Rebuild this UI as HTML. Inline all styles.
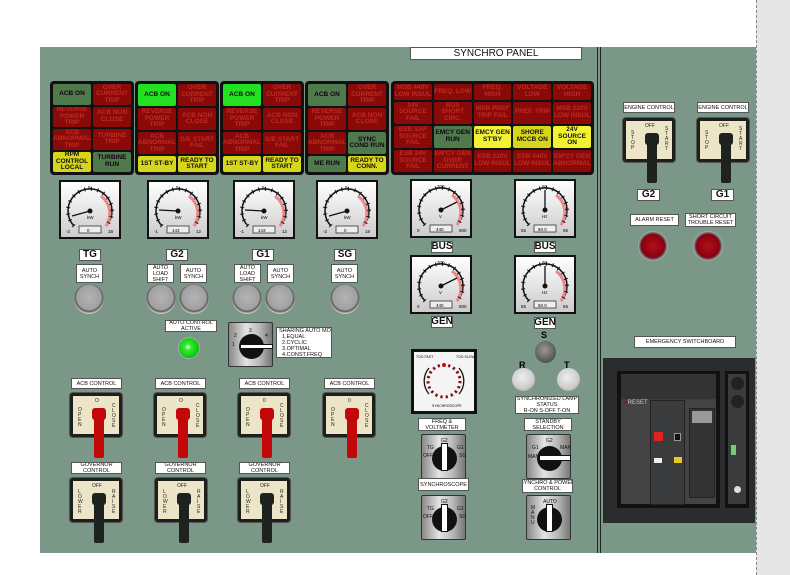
<!DOCTYPE html>
<html><head><meta charset="utf-8"><style>
*{box-sizing:border-box;margin:0;padding:0}
body{width:790px;height:575px;background:#fff;position:relative;overflow:hidden;font-family:"Liberation Sans",sans-serif}
.a{position:absolute}
.panel{left:40px;top:47px;width:716px;height:506px;background:#7a9787}
.strip{left:756px;top:0;width:34px;height:575px;background:#e6e6e6;border-left:1px dashed #888}
.lbl{position:absolute;background:#fff;border:1px solid #555;font-size:5.5px;line-height:6px;text-align:center;display:flex;align-items:center;justify-content:center;color:#111;white-space:nowrap;overflow:hidden}
.big{font-size:10px;font-weight:bold}
.blk{position:absolute;background:#111;border-radius:4px;padding:3px;display:grid;gap:2px;top:81px;height:94px}
.c{border-radius:2px;font-size:6.5px;line-height:6.5px;text-align:center;display:flex;align-items:center;justify-content:center;background:#8a0a0a;color:#c02a20;font-weight:bold;overflow:hidden}
.dg{background:#4f7a4c;color:#101;}
.bg{background:#22e022;color:#111}
.ye{background:#d6d61c;color:#111}
.by{background:#f2f232;color:#111}
.btn{position:absolute;width:30px;height:30px;border-radius:50%;background:radial-gradient(circle at 50% 45%,#b4b4b4 0,#a0a0a0 55%,#5a5a5a 62%,#d0d0d0 72%,#777 100%)}
.sw{position:absolute;width:52px;height:44px;background:#ede5c8;border:3px solid #1c1f1c;border-radius:3px;box-shadow:0 0 0 1px #555}
.sw span{position:absolute;font-size:5px;color:#222;line-height:5px}
.hd{position:absolute;left:19px;top:12px;width:14px;height:12px;border-radius:3px}
.st{position:absolute;left:21px;top:22px;width:10px;height:40px;border-radius:0 0 2px 2px}
.red .hd,.red .st{background:#c20808}
.blkh .hd,.blkh .st{background:#1e2320}
.rs{position:absolute;width:45px;height:45px;background:linear-gradient(90deg,#888,#e4e4e4 40%,#bbb 70%,#777);border:1px solid #333;border-radius:2px}
.rs span{position:absolute;font-size:5px;color:#111}
.kn{position:absolute;left:10px;top:11px;width:25px;height:25px;border-radius:50%;background:#111}
.kb{position:absolute;left:19px;top:8px;width:7px;height:28px;background:#fff;border:1px solid #111}
</style></head><body>
<svg width="0" height="0" style="position:absolute"><defs>
<linearGradient id="gf" x1="0" y1="0" x2="0" y2="1"><stop offset="0" stop-color="#fff"/><stop offset="1" stop-color="#ccc"/></linearGradient>
<symbol id="g" viewBox="0 0 64 61">
<rect x="1" y="1" width="62" height="59" fill="#111"/><rect x="3" y="3" width="58" height="55" fill="url(#gf)"/>
<path d="M16 47 A22 22 0 1 1 48 47" fill="none" stroke="#111" stroke-width="1.5"/>
<path d="M43 17 A22 22 0 0 1 48 47" fill="none" stroke="#e88" stroke-width="3"/>
<path d="M16 47 A22 22 0 1 1 48 47" fill="none" stroke="#111" stroke-width="4" stroke-dasharray="1 5.5"/>
<circle cx="32" cy="32" r="2.5" fill="#111"/>
<rect x="21" y="47" width="22" height="7" fill="#eee" stroke="#333" stroke-width=".8"/>
</symbol>
</defs></svg>
<div class="a panel"></div>
<div class="a strip"></div>
<div class="a" style="left:597px;top:47px;width:4px;height:506px;border-left:1px solid #222;border-right:1px solid #222"></div>
<div class="lbl" style="left:410px;top:47px;width:172px;height:13px;font-size:10px">SYNCHRO PANEL</div>

<div class="blk" style="left:50px;width:84px;grid-template-columns:1fr 1fr">
<div class="c dg">ACB ON</div><div class="c">OVER CURRENT TRIP</div><div class="c">REVERSE POWER TRIP</div><div class="c">ACB NON CLOSE</div><div class="c">ACB ABNORMAL TRIP</div><div class="c">TURBINE TRIP</div><div class="c ye">RPM CONTROL LOCAL</div><div class="c dg">TURBINE RUN</div></div>
<div class="blk" style="left:135px;width:84px;grid-template-columns:1fr 1fr">
<div class="c bg">ACB ON</div><div class="c">OVER CURRENT TRIP</div><div class="c">REVERSE POWER TRIP</div><div class="c">ACB NON CLOSE</div><div class="c">ACB ABNORMAL TRIP</div><div class="c">G/E START FAIL</div><div class="c ye">1ST ST-BY</div><div class="c ye">READY TO START</div></div>
<div class="blk" style="left:220px;width:84px;grid-template-columns:1fr 1fr">
<div class="c bg">ACB ON</div><div class="c">OVER CURRENT TRIP</div><div class="c">REVERSE POWER TRIP</div><div class="c">ACB NON CLOSE</div><div class="c">ACB ABNORMAL TRIP</div><div class="c">G/E START FAIL</div><div class="c ye">1ST ST-BY</div><div class="c ye">READY TO START</div></div>
<div class="blk" style="left:305px;width:84px;grid-template-columns:1fr 1fr">
<div class="c dg">ACB ON</div><div class="c">OVER CURRENT TRIP</div><div class="c">REVERSE POWER TRIP</div><div class="c">ACB NON CLOSE</div><div class="c">ACB ABNORMAL TRIP</div><div class="c dg">SYNC COND RUN</div><div class="c dg">ME RUN</div><div class="c ye">READY TO CONN.</div></div>
<div class="blk" style="left:391px;width:203px;grid-template-columns:repeat(5,1fr)">
<div class="c">MSB 440V LOW INSUL</div><div class="c">FREQ. LOW</div><div class="c">FREQ. HIGH</div><div class="c">VOLTAGE LOW</div><div class="c">VOLTAGE HIGH</div>
<div class="c">24V SOURCE FAIL</div><div class="c">BUS SHORT CIRC.</div><div class="c">MSB PREF TRIP FAIL</div><div class="c">PREF. TRIP</div><div class="c">MSB 220V LOW INSUL</div>
<div class="c">ESB SAF SOURCE FAIL</div><div class="c dg">EMCY GEN RUN</div><div class="c by">EMCY GEN ST'BY</div><div class="c ye">SHORE MCCB ON</div><div class="c by">24V SOURCE ON</div>
<div class="c">ESB 24V SOURCE FAIL</div><div class="c">EM'CY GEN OVER CURRENT</div><div class="c">ESB 220V LOW INSUL</div><div class="c">ESB 440V LOW INSUL</div><div class="c">EM'CY GEN ABNORMAL</div></div>

<svg class="a" style="left:58px;top:179px" width="64" height="61" font-size="4.5" font-family="Liberation Sans"><use href="#g"/><line x1="32" y1="32" x2="14" y2="37" stroke="#111" stroke-width="1.3"/><text x="29" y="40">kW</text><text x="29" y="53">0</text><text x="8" y="54">-2</text><text x="50" y="54">18</text><text x="30" y="10">8</text></svg>
<svg class="a" style="left:146px;top:179px" width="64" height="61" font-size="4.5" font-family="Liberation Sans"><use href="#g"/><line x1="32" y1="32" x2="13" y2="31" stroke="#111" stroke-width="1.3"/><text x="29" y="40">kW</text><text x="26" y="53">143</text><text x="8" y="54">-1</text><text x="50" y="54">12</text><text x="30" y="10">5</text></svg>
<svg class="a" style="left:232px;top:179px" width="64" height="61" font-size="4.5" font-family="Liberation Sans"><use href="#g"/><line x1="32" y1="32" x2="13" y2="31" stroke="#111" stroke-width="1.3"/><text x="29" y="40">kW</text><text x="26" y="53">143</text><text x="8" y="54">-1</text><text x="50" y="54">12</text><text x="30" y="10">5</text></svg>
<svg class="a" style="left:315px;top:179px" width="64" height="61" font-size="4.5" font-family="Liberation Sans"><use href="#g"/><line x1="32" y1="32" x2="14" y2="37" stroke="#111" stroke-width="1.3"/><text x="29" y="40">kW</text><text x="29" y="53">0</text><text x="8" y="54">-2</text><text x="50" y="54">18</text><text x="30" y="10">8</text></svg>
<svg class="a" style="left:409px;top:178px" width="64" height="61" font-size="4.5" font-family="Liberation Sans"><use href="#g"/><line x1="32" y1="32" x2="48" y2="24" stroke="#111" stroke-width="1.3"/><text x="30" y="40">V</text><text x="27" y="53">440</text><text x="8" y="54">0</text><text x="50" y="54">600</text><text x="28" y="10">300</text></svg>
<svg class="a" style="left:513px;top:178px" width="64" height="61" font-size="4.5" font-family="Liberation Sans"><use href="#g"/><line x1="32" y1="32" x2="32" y2="12" stroke="#111" stroke-width="1.3"/><text x="29" y="40">Hz</text><text x="25" y="53">60.0</text><text x="8" y="54">55</text><text x="50" y="54">65</text><text x="29" y="10">60</text></svg>
<svg class="a" style="left:409px;top:254px" width="64" height="61" font-size="4.5" font-family="Liberation Sans"><use href="#g"/><line x1="32" y1="32" x2="48" y2="24" stroke="#111" stroke-width="1.3"/><text x="30" y="40">V</text><text x="27" y="53">440</text><text x="8" y="54">0</text><text x="50" y="54">600</text><text x="28" y="10">300</text></svg>
<svg class="a" style="left:513px;top:254px" width="64" height="61" font-size="4.5" font-family="Liberation Sans"><use href="#g"/><line x1="32" y1="32" x2="32" y2="12" stroke="#111" stroke-width="1.3"/><text x="29" y="40">Hz</text><text x="25" y="53">60.0</text><text x="8" y="54">55</text><text x="50" y="54">65</text><text x="29" y="10">60</text></svg>

<div class="lbl big" style="left:79px;top:249px;width:22px;height:12px">TG</div>
<div class="lbl big" style="left:166px;top:249px;width:22px;height:12px">G2</div>
<div class="lbl big" style="left:252px;top:249px;width:22px;height:12px">G1</div>
<div class="lbl big" style="left:334px;top:249px;width:22px;height:12px">SG</div>
<div class="lbl big" style="left:431px;top:241px;width:22px;height:12px">BUS</div>
<div class="lbl big" style="left:534px;top:241px;width:22px;height:12px">BUS</div>
<div class="lbl big" style="left:431px;top:316px;width:22px;height:12px">GEN</div>
<div class="lbl big" style="left:534px;top:317px;width:22px;height:12px">GEN</div>

<div class="lbl" style="left:76px;top:264px;width:27px;height:19px">AUTO<br>SYNCH</div>
<div class="lbl" style="left:147px;top:264px;width:27px;height:19px">AUTO<br>LOAD<br>SHIFT</div>
<div class="lbl" style="left:180px;top:264px;width:27px;height:19px">AUTO<br>SYNCH</div>
<div class="lbl" style="left:234px;top:264px;width:27px;height:19px">AUTO<br>LOAD<br>SHIFT</div>
<div class="lbl" style="left:267px;top:264px;width:27px;height:19px">AUTO<br>SYNCH</div>
<div class="lbl" style="left:331px;top:264px;width:27px;height:19px">AUTO<br>SYNCH</div>
<div class="btn" style="left:74px;top:284px"></div>
<div class="btn" style="left:146px;top:284px"></div>
<div class="btn" style="left:179px;top:284px"></div>
<div class="btn" style="left:232px;top:284px"></div>
<div class="btn" style="left:265px;top:284px"></div>
<div class="btn" style="left:330px;top:284px"></div>

<div class="lbl" style="left:165px;top:320px;width:52px;height:12px">AUTO CONTROL<br>ACTIVE</div>
<div class="a" style="left:178px;top:337px;width:22px;height:22px;border-radius:50%;background:radial-gradient(circle at 45% 45%,#efe 0,#3e3 20%,#1c1 60%,#080 100%);border:1px solid #aaa"></div>
<div class="rs" style="left:228px;top:322px"><span style="left:5px;top:10px">2</span><span style="left:20px;top:5px">3</span><span style="left:36px;top:10px">4</span><span style="left:3px;top:19px">1</span><div class="kn"></div><div class="a" style="left:11px;top:21px;width:33px;height:5px;background:#fff;border:1px solid #111"></div></div>
<div class="lbl" style="left:276px;top:327px;width:56px;height:31px;text-align:left;justify-content:flex-start;padding-left:2px">SHARING AUTO MODE<br>&nbsp;&nbsp;1.EQUAL<br>&nbsp;&nbsp;2.CYCLIC<br>&nbsp;&nbsp;3.OPTIMAL<br>&nbsp;&nbsp;4.CONST.FREQ</div>

<div class="lbl" style="left:71px;top:378px;width:51px;height:11px">ACB CONTROL</div>
<div class="lbl" style="left:155px;top:378px;width:51px;height:11px">ACB CONTROL</div>
<div class="lbl" style="left:239px;top:378px;width:51px;height:11px">ACB CONTROL</div>
<div class="lbl" style="left:324px;top:378px;width:51px;height:11px">ACB CONTROL</div>
<div class="sw red" style="left:70px;top:393px"><span style="left:22px;top:3px">O</span><span style="left:5px;top:12px">O<br>P<br>E<br>N</span><span style="left:39px;top:8px">C<br>L<br>O<br>S<br>E</span><div class="st"></div><div class="hd"></div></div>
<div class="sw red" style="left:154px;top:393px"><span style="left:22px;top:3px">O</span><span style="left:5px;top:12px">O<br>P<br>E<br>N</span><span style="left:39px;top:8px">C<br>L<br>O<br>S<br>E</span><div class="st"></div><div class="hd"></div></div>
<div class="sw red" style="left:238px;top:393px"><span style="left:22px;top:3px">0</span><span style="left:5px;top:12px">O<br>P<br>E<br>N</span><span style="left:39px;top:8px">C<br>L<br>O<br>S<br>E</span><div class="st"></div><div class="hd"></div></div>
<div class="sw red" style="left:323px;top:393px"><span style="left:22px;top:3px">0</span><span style="left:5px;top:12px">O<br>P<br>E<br>N</span><span style="left:39px;top:8px">C<br>L<br>O<br>S<br>E</span><div class="st"></div><div class="hd"></div></div>

<div class="lbl" style="left:71px;top:462px;width:51px;height:12px">GOVERNOR<br>CONTROL</div>
<div class="lbl" style="left:155px;top:462px;width:51px;height:12px">GOVERNOR<br>CONTROL</div>
<div class="lbl" style="left:239px;top:462px;width:51px;height:12px">GOVERNOR<br>CONTROL</div>
<div class="sw blkh" style="left:70px;top:478px"><span style="left:19px;top:3px">OFF</span><span style="left:5px;top:9px">L<br>O<br>W<br>E<br>R</span><span style="left:39px;top:9px">R<br>A<br>I<br>S<br>E</span><div class="st"></div><div class="hd"></div></div>
<div class="sw blkh" style="left:155px;top:478px"><span style="left:19px;top:3px">OFF</span><span style="left:5px;top:9px">L<br>O<br>W<br>E<br>R</span><span style="left:39px;top:9px">R<br>A<br>I<br>S<br>E</span><div class="st"></div><div class="hd"></div></div>
<div class="sw blkh" style="left:238px;top:478px"><span style="left:19px;top:3px">OFF</span><span style="left:5px;top:9px">L<br>O<br>W<br>E<br>R</span><span style="left:39px;top:9px">R<br>A<br>I<br>S<br>E</span><div class="st"></div><div class="hd"></div></div>

<svg class="a" style="left:411px;top:349px" width="66" height="65" font-size="3.5" font-family="Liberation Sans"><rect x="0" y="0" width="66" height="65" fill="#111"/><rect x="3" y="3" width="60" height="59" fill="#f4f4f4"/>
<text x="5" y="9">TOO FAST</text><text x="45" y="9">TOO SLOW</text><text x="21" y="58">SYNCHROSCOPE</text>
<circle cx="33" cy="32" r="16" fill="none" stroke="#7a1010" stroke-width="3" stroke-dasharray="2.2 3.1"/>
<path d="M18 45 A20 20 0 0 1 18 19 M48 19 A20 20 0 0 1 48 45" fill="none" stroke="#111" stroke-width="1.3"/><circle cx="33" cy="16" r="2" fill="#d00"/></svg>
<div class="a" style="left:541px;top:330px;font-size:9px;font-weight:bold">S</div>
<div class="a" style="left:535px;top:341px;width:21px;height:22px;border-radius:50%;background:radial-gradient(circle at 45% 40%,#999,#555 70%,#333)"></div>
<div class="a" style="left:519px;top:360px;font-size:9px;font-weight:bold">R</div>
<div class="a" style="left:564px;top:360px;font-size:9px;font-weight:bold">T</div>
<div class="a" style="left:512px;top:368px;width:23px;height:23px;border-radius:50%;background:radial-gradient(circle at 45% 40%,#eee,#ccc 60%,#888)"></div>
<div class="a" style="left:557px;top:368px;width:23px;height:23px;border-radius:50%;background:radial-gradient(circle at 45% 40%,#eee,#ccc 60%,#888)"></div>
<div class="lbl" style="left:515px;top:396px;width:64px;height:18px">SYNCHRONIZED LAMP<br>STATUS<br>R-ON S-OFF T-ON</div>

<div class="lbl" style="left:418px;top:418px;width:48px;height:13px">FREQ &amp;<br>VOLTMETER</div>
<div class="rs" style="left:421px;top:434px"><span style="left:19px;top:3px">G2</span><span style="left:5px;top:10px">TG</span><span style="left:35px;top:10px">G1</span><span style="left:1px;top:18px">OFF</span><span style="left:37px;top:18px">SG</span><div class="kn"></div><div class="kb"></div></div>
<div class="lbl" style="left:418px;top:478px;width:51px;height:13px">SYNCHROSCOPE</div>
<div class="rs" style="left:421px;top:495px"><span style="left:19px;top:3px">G2</span><span style="left:5px;top:10px">TG</span><span style="left:35px;top:10px">G1</span><span style="left:1px;top:18px">OFF</span><span style="left:37px;top:18px">SG</span><div class="kn"></div><div class="kb"></div></div>
<div class="lbl" style="left:524px;top:418px;width:48px;height:13px">STANDBY<br>SELECTION</div>
<div class="rs" style="left:526px;top:434px"><span style="left:19px;top:3px">G2</span><span style="left:5px;top:10px">G1</span><span style="left:33px;top:10px">MAN</span><span style="left:1px;top:19px">MAN</span><div class="kn"></div><div class="a" style="left:12px;top:20px;width:32px;height:6px;background:#fff;border:1px solid #111"></div></div>
<div class="lbl" style="left:522px;top:479px;width:51px;height:14px">SYNCHRO &amp; POWER<br>CONTROL</div>
<div class="rs" style="left:526px;top:495px"><span style="left:16px;top:3px">AUTO</span><span style="left:4px;top:10px;line-height:5px">M<br>A<br>N<br>U</span><div class="kn"></div><div class="kb"></div></div>

<div class="lbl" style="left:623px;top:102px;width:52px;height:11px">ENGINE CONTROL</div>
<div class="lbl" style="left:697px;top:102px;width:52px;height:11px">ENGINE CONTROL</div>
<div class="sw blkh" style="left:623px;top:118px"><span style="left:19px;top:3px">OFF</span><span style="left:5px;top:10px">S<br>T<br>O<br>P</span><span style="left:39px;top:6px">S<br>T<br>A<br>R<br>T</span><div class="st"></div><div class="hd"></div></div>
<div class="sw blkh" style="left:697px;top:118px"><span style="left:19px;top:3px">OFF</span><span style="left:5px;top:10px">S<br>T<br>O<br>P</span><span style="left:39px;top:6px">S<br>T<br>A<br>R<br>T</span><div class="st"></div><div class="hd"></div></div>
<div class="lbl big" style="left:637px;top:189px;width:23px;height:12px">G2</div>
<div class="lbl big" style="left:711px;top:189px;width:23px;height:12px">G1</div>
<div class="lbl" style="left:630px;top:214px;width:49px;height:12px">ALARM RESET</div>
<div class="lbl" style="left:685px;top:213px;width:51px;height:14px">SHORT CIRCUIT<br>TROUBLE RESET</div>
<div class="a" style="left:638px;top:231px;width:30px;height:30px;border-radius:50%;background:radial-gradient(circle,#b0101a 0,#8a0010 55%,#666 62%,#ddd 75%,#888 100%)"></div>
<div class="a" style="left:693px;top:231px;width:30px;height:30px;border-radius:50%;background:radial-gradient(circle,#b0101a 0,#8a0010 55%,#666 62%,#ddd 75%,#888 100%)"></div>
<div class="lbl" style="left:634px;top:336px;width:102px;height:12px">EMERGENCY SWITCHBOARD</div>

<div class="a" style="left:603px;top:358px;width:152px;height:165px;background:#2b2c2d"></div>
<div class="a" style="left:617px;top:371px;width:103px;height:137px;background:#111"></div>
<div class="a" style="left:621px;top:374px;width:95px;height:130px;background:#3d3e40"></div>
<div class="a" style="left:621px;top:374px;width:95px;height:25px;background:#333"></div>
<div class="a" style="left:621px;top:400px;width:95px;height:104px;background:#444"></div>
<div class="a" style="left:624px;top:400px;width:24px;height:8px;font-size:6px;color:#ccc;white-space:nowrap"><span style="color:#a00">●</span>RESET</div>
<div class="a" style="left:650px;top:400px;width:35px;height:105px;background:#3a3b3c;border:1px solid #222"></div>
<div class="a" style="left:689px;top:408px;width:26px;height:90px;background:#333;border:1px solid #222"></div>
<div class="a" style="left:654px;top:432px;width:9px;height:9px;background:#d22"></div>
<div class="a" style="left:674px;top:433px;width:7px;height:8px;background:#111;border:1px solid #999"></div>
<div class="a" style="left:654px;top:458px;width:8px;height:5px;background:#eee"></div>
<div class="a" style="left:674px;top:457px;width:8px;height:6px;background:#e8c820"></div>
<div class="a" style="left:692px;top:411px;width:20px;height:12px;background:#ddd;opacity:.6"></div>
<div class="a" style="left:725px;top:371px;width:24px;height:137px;background:#111"></div>
<div class="a" style="left:728px;top:374px;width:18px;height:130px;background:#3a3b3c"></div>
<div class="a" style="left:731px;top:377px;width:13px;height:13px;border-radius:50%;background:#222"></div>
<div class="a" style="left:731px;top:395px;width:13px;height:13px;border-radius:50%;background:#222"></div>
<div class="a" style="left:731px;top:445px;width:5px;height:10px;background:#7c7"></div>
<div class="a" style="left:734px;top:486px;width:7px;height:7px;border-radius:50%;background:#ddd"></div>
</body></html>
